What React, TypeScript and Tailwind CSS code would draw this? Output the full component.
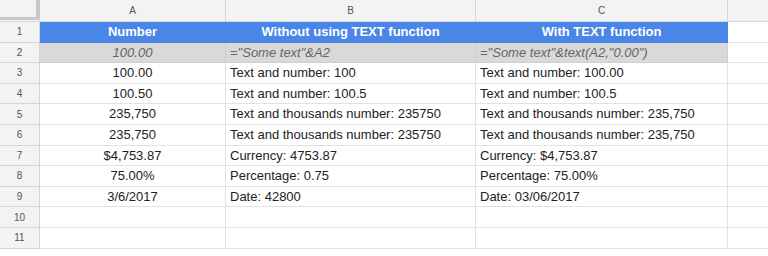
const COLS = [
  { key: 'A', w: 'w-[186px]' },
  { key: 'B', w: 'w-[250px]' },
  { key: 'C', w: 'w-[252px]' },
];

const ROWS: [string, string, string][] = [
  ['Number', 'Without using TEXT function', 'With TEXT function'],
  ['100.00', '="Some text"&A2', '="Some text"&text(A2,"0.00")'],
  ['100.00', 'Text and number: 100', 'Text and number: 100.00'],
  ['100.50', 'Text and number: 100.5', 'Text and number: 100.5'],
  ['235,750', 'Text and thousands number: 235750', 'Text and thousands number: 235,750'],
  ['235,750', 'Text and thousands number: 235750', 'Text and thousands number: 235,750'],
  ['$4,753.87', 'Currency: 4753.87', 'Currency: $4,753.87'],
  ['75.00%', 'Percentage: 0.75', 'Percentage: 75.00%'],
  ['3/6/2017', 'Date: 42800', 'Date: 03/06/2017'],
  ['', '', ''],
  ['', '', ''],
];

export default function App() {
  return (
    <div className="w-[768px] h-[256px] overflow-hidden bg-white text-[13px] text-[#222] font-['Liberation_Sans',Arial,sans-serif]">
      {/* column letters */}
      <div className="flex h-[22px] bg-[#f3f3f3] border-b border-[#d4d4d4]">
        <div className="w-[40px] shrink-0 border-r-[4px] border-b-[3px] border-[#c8c8c8] h-[20px]" />
        {COLS.map((c) => (
          <div
            key={c.key}
            className={`${c.w} shrink-0 flex items-center justify-center border-r border-[#d4d4d4] text-[10px] text-[#555]`}
          >
            {c.key}
          </div>
        ))}
        <div className="flex-1" />
      </div>

      {ROWS.map((row, i) => {
        const head = i === 0;
        const formula = i === 1;
        return (
          <div key={i} className="flex h-[20.6px]">
            <div className="w-[40px] shrink-0 flex items-center justify-center bg-[#f3f3f3] border-r border-b border-[#d4d4d4] text-[10px] text-[#555]">
              {i + 1}
            </div>
            {row.map((cell, j) => (
              <div
                key={j}
                className={`${COLS[j].w} shrink-0 flex items-center px-[4px] border-r border-b whitespace-nowrap overflow-hidden ${
                  head
                    ? 'bg-[#4a86e8] border-[#4a86e8] text-white font-bold justify-center'
                    : formula
                      ? 'bg-[#d9d9d9] border-[#cfcfcf] text-[#666] italic'
                      : 'border-[#e2e2e2]'
                } ${j === 0 && !head ? 'justify-center' : ''}`}
              >
                {cell}
              </div>
            ))}
            <div className="flex-1 border-b border-[#e2e2e2]" />
          </div>
        );
      })}
    </div>
  );
}
